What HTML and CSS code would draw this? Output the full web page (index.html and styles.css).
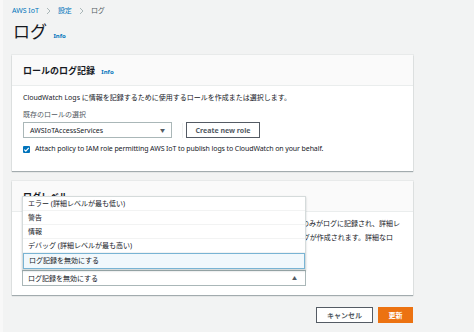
FILE: index.html
```html
<!DOCTYPE html>
<html lang="ja">
<head>
    <meta charset="UTF-8">
    <meta name="viewport" content="width=device-width, initial-scale=1.0">
    <title>ログ - AWS IoT</title>
    <link rel="stylesheet" href="styles.css">
</head>
<body>

<div class="page">
    <nav class="crumbs">
        <a href="#">AWS IoT</a>
        <svg class="sep" width="5" height="8" viewBox="0 0 5 8"><path d="M1 1l3 3-3 3" fill="none" stroke="#aab7b8" stroke-width="1"/></svg>
        <a href="#">設定</a>
        <svg class="sep" width="5" height="8" viewBox="0 0 5 8"><path d="M1 1l3 3-3 3" fill="none" stroke="#aab7b8" stroke-width="1"/></svg>
        <span class="current">ログ</span>
    </nav>

    <h1>ログ <a href="#" class="info">Info</a></h1>

    <section class="card">
        <div class="card-head">
            <h2>ロールのログ記録 <a href="#" class="info">Info</a></h2>
        </div>
        <div class="card-body">
            <p class="desc">CloudWatch Logs に情報を記録するために使用するロールを作成または選択します。</p>
            <label class="field-label">既存のロールの選択</label>
            <div class="role-row">
                <div class="select role-select">
                    <span>AWSIoTAccessServices</span>
                    <span class="caret">▼</span>
                </div>
                <span class="divider"></span>
                <button class="btn">Create new role</button>
            </div>
            <label class="check">
                <span class="box">
                    <svg width="7" height="7" viewBox="0 0 7 7"><path d="M1.3 3.6l1.5 1.5 3-3.3" fill="none" stroke="#fff" stroke-width="1.2"/></svg>
                </span>
                Attach policy to IAM role permitting AWS IoT to publish logs to CloudWatch on your behalf.
            </label>
        </div>
    </section>

    <section class="card">
        <div class="card-head">
            <h2>ログレベル <a href="#" class="info">Info</a></h2>
        </div>
        <div class="card-body level-body">
            <p class="level-desc">
                <span>ログに記録する詳細の量を選択します。[エラー] を選択すると、エラーのみがログに記録され、詳細レ</span>
                <span class="second">ベルは最も低くなります。[デバッグ] では最も詳細なログが作成されます。詳細なロ</span>
            </p>
            <div class="level-field">
                <ul class="options">
                    <li>エラー (詳細レベルが最も低い)</li>
                    <li>警告</li>
                    <li>情報</li>
                    <li>デバッグ (詳細レベルが最も高い)</li>
                    <li class="active">ログ記録を無効にする</li>
                </ul>
                <div class="select level-select">
                    <span>ログ記録を無効にする</span>
                    <span class="caret">▲</span>
                </div>
            </div>
        </div>
    </section>

    <div class="actions">
        <button class="btn">キャンセル</button>
        <button class="btn primary">更新</button>
    </div>
</div>

</body>
</html>
```

FILE: styles.css
```css
* {
    margin: 0;
    padding: 0;
    box-sizing: border-box;
    font-family: 'Noto Sans', 'Noto Sans CJK JP', sans-serif;
}
body {
    background: #f2f3f3;
    color: #16191f;
    font-size: 7px;
    border-left: 3px solid #f8f8f8;
    min-height: 100vh;
}
.page {
    width: 410px;
    padding-left: 9px;
}
a {
    color: #0073bb;
    text-decoration: none;
}
.crumbs {
    display: flex;
    align-items: center;
    height: 10px;
    margin-top: 6px;
    line-height: 10px;
}
.crumbs .sep {
    margin: 0 7px;
}
.crumbs .current {
    color: #545b64;
}
h1 {
    font-size: 17px;
    font-weight: 400;
    line-height: 20px;
    margin: 6px 0 13px 1px;
}
.info {
    font-size: 6px;
    font-weight: 700;
    line-height: 1;
    margin-left: 2px;
}
.card {
    background: #fff;
    box-shadow: 0 1px 1px rgba(0, 28, 36, 0.3), 0 0 0 1px rgba(0, 28, 36, 0.04);
    margin-bottom: 10px;
}
.card-head {
    height: 31px;
    padding: 0 11px;
    background: #fafafa;
    border-bottom: 1px solid #eaeded;
    display: flex;
    align-items: center;
}
h2 {
    font-size: 9px;
    font-weight: 700;
}
h2 .info {
    margin-left: 4px;
}
.card-body {
    padding: 6px 13px 16px 11px;
}
.desc {
    line-height: 12px;
    margin-bottom: 6px;
}
.field-label {
    display: block;
    color: #545b64;
    line-height: 10px;
    margin-bottom: 2px;
}
.role-row {
    display: flex;
    align-items: center;
}
.select {
    display: flex;
    justify-content: space-between;
    align-items: center;
    height: 16px;
    padding: 0 6px 0 6px;
    border: 1px solid #aab7b8;
    background: #fff;
}
.caret {
    font-size: 5px;
    line-height: 1;
    color: #545b64;
}
.role-select {
    width: 149px;
}
.divider {
    width: 1px;
    height: 15px;
    background: #eef0f0;
    margin: 0 3px 0 10px;
}
.btn {
    height: 16px;
    padding: 0 8px;
    border: 1px solid #545b64;
    background: #fff;
    color: #545b64;
    font-size: 7px;
    font-weight: 700;
    cursor: pointer;
}
.role-row .btn {
    width: 74px;
}
.check {
    display: flex;
    align-items: center;
    margin-top: 5px;
    line-height: 12px;
    letter-spacing: -0.1px;
}
.box {
    display: flex;
    width: 7px;
    height: 7px;
    background: #0073bb;
    border-radius: 1px;
    margin-right: 5px;
}
.level-body {
    padding: 5px 13px 9px 10px;
}
.level-desc {
    line-height: 14px;
    text-align: right;
}
.level-desc span {
    display: block;
    white-space: nowrap;
}
.level-desc .second {
    margin-right: 7px;
}
.level-field {
    position: relative;
    margin-top: 25px;
    width: 284px;
}
.options {
    position: absolute;
    left: 0;
    right: 0;
    bottom: 100%;
    list-style: none;
    background: #fff;
    border: 1px solid #d5dbdb;
    box-shadow: 0 1px 2px rgba(0, 28, 36, 0.2);
}
.options li {
    height: 14px;
    line-height: 14px;
    padding: 0 5px;
    border-bottom: 1px solid #f2f3f3;
}
.options li.active {
    height: 16px;
    line-height: 14px;
    background: #f1f8fc;
    border: 1px solid #79b4d4;
}
.level-select {
    width: 284px;
    padding: 0 8px 0 5px;
}
.actions {
    display: flex;
    justify-content: flex-end;
    gap: 5px;
    width: 401px;
    margin-top: 12px;
}
.actions .btn {
    width: 57px;
}
.actions .primary {
    width: 35px;
    background: #ec7211;
    border-color: #ec7211;
    color: #fff;
}
```
